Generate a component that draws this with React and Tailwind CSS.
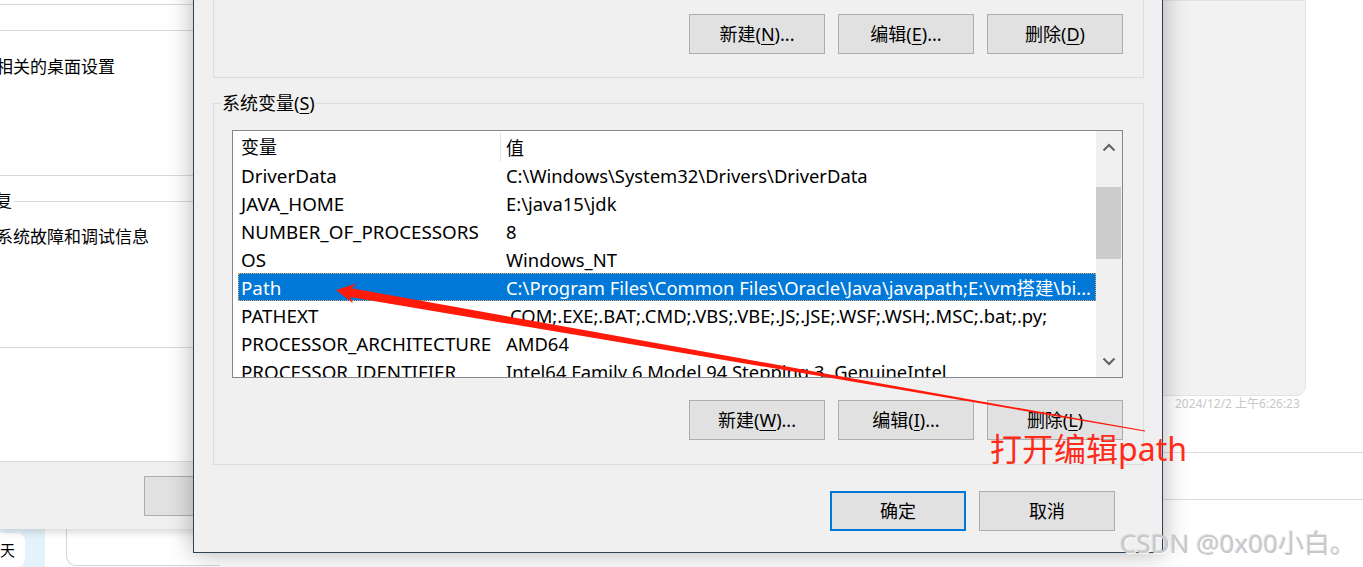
import React from "react";

const U = ({ children }) => <span className="underline underline-offset-[3px] decoration-1">{children}</span>;

function Btn({ children, primary }) {
  return (
    <div
      className={
        primary
          ? "w-[136px] h-[40px] shrink-0 flex items-center justify-center bg-[#e1e1e1] border-2 border-[#0078d7] text-[18px] leading-none text-black"
          : "w-[136px] h-[40px] shrink-0 flex items-center justify-center bg-[#e1e1e1] border border-[#adadad] text-[18px] leading-none text-black"
      }
    >
      {children}
    </div>
  );
}

function Chevron({ down }) {
  return (
    <svg width="14" height="9" viewBox="0 0 14 9">
      <polyline
        points={down ? "1.5,1.5 7,7 12.5,1.5" : "1.5,7.5 7,2 12.5,7.5"}
        fill="none"
        stroke="#606060"
        strokeWidth="2"
      />
    </svg>
  );
}

const rows = [
  ["DriverData", "C:\\Windows\\System32\\Drivers\\DriverData"],
  ["JAVA_HOME", "E:\\java15\\jdk"],
  ["NUMBER_OF_PROCESSORS", "8"],
  ["OS", "Windows_NT"],
  ["Path", "C:\\Program Files\\Common Files\\Oracle\\Java\\javapath;E:\\vm搭建\\bi...", true],
  ["PATHEXT", ".COM;.EXE;.BAT;.CMD;.VBS;.VBE;.JS;.JSE;.WSF;.WSH;.MSC;.bat;.py;"],
  ["PROCESSOR_ARCHITECTURE", "AMD64"],
  ["PROCESSOR_IDENTIFIER", "Intel64 Family 6 Model 94 Stepping 3, GenuineIntel"],
];

export default function App() {
  return (
    <div className="relative w-[1363px] h-[567px] overflow-hidden bg-white text-black font-['Noto_Sans','Noto_Sans_CJK_SC',sans-serif]">
      {/* bottom-left chat strip */}
      <div className="absolute left-0 top-[529px] w-[220px] h-[38px] flex bg-white">
        <div className="w-[45px] bg-[#e4f3fb] pt-[4px] shrink-0">
          <div className="w-[25px] h-full bg-white rounded-r-[8px] flex items-center justify-end pr-[10px] text-[15px] whitespace-nowrap">
            聊天
          </div>
        </div>
        <div className="w-[21px] shrink-0" />
        <div className="flex-1 h-[37px] border-l border-b border-[#d6d6d6] rounded-bl-[10px]" />
      </div>

      {/* left system properties window */}
      <div className="absolute left-0 top-0 w-[260px] h-[529px] bg-white flex flex-col shadow-[0_3px_8px_rgba(0,0,0,0.16)] text-[17px]">
        <div className="h-[5px] border-b border-[#d9d9d9] shrink-0" />
        <div className="h-[26px] border-b border-[#d9d9d9] shrink-0" />
        <div className="h-[145px] border-b border-[#d9d9d9] shrink-0 pt-[24px]">
          <p className="-ml-[4px] leading-[24px] whitespace-nowrap">相关的桌面设置</p>
        </div>
        <div className="h-[172px] border-b border-[#d9d9d9] shrink-0 pt-[13px] flex flex-col">
          <div className="h-[24px] flex items-center">
            <span className="-ml-[5px] leading-[24px]">复</span>
            <div className="flex-1 ml-[2px] border-t border-[#d9d9d9]" />
          </div>
          <p className="mt-[12px] -ml-[4px] leading-[24px] whitespace-nowrap">系统故障和调试信息</p>
        </div>
        <div className="h-[113px] shrink-0" />
        <div className="h-[68px] shrink-0 border-t border-[#dcdcdc] bg-[#f0f0f0] pt-[14px] pl-[144px]">
          <div className="w-[112px] h-[40px] bg-[#e1e1e1] border border-[#adadad]" />
        </div>
      </div>

      {/* right chat panel */}
      <div className="absolute left-[1000px] top-0 w-[363px] h-[567px] flex flex-col bg-white">
        <div className="w-[306px] h-[396px] shrink-0 bg-[#f2f2f2] border border-[#e3e3e3] rounded-br-[10px]" />
        <div className="pl-[175px] text-[12px] leading-[16px] text-[#c8c8c8] whitespace-nowrap">2024/12/2 上午6:26:23</div>
        <div className="h-[41px] shrink-0 border-b border-[#dcdcdc]" />
        <div className="h-[47px] shrink-0 border-b border-[#dcdcdc]" />
      </div>

      {/* environment variables dialog */}
      <div className="absolute left-[193px] top-[-21px] w-[970px] h-[574px] bg-[#f0f0f0] border border-[#2f4356] shadow-[0_0_24px_rgba(0,0,0,0.3)] flex flex-col pl-[19px] pr-[18px]">
        {/* user variables group (bottom part) */}
        <div className="h-[98px] shrink-0 border border-[#dcdcdc] flex items-end justify-end pr-[20px] pb-[23px] gap-[13px]">
          <Btn>
            新建(<U>N</U>)...
          </Btn>
          <Btn>
            编辑(<U>E</U>)...
          </Btn>
          <Btn>
            删除(<U>D</U>)
          </Btn>
        </div>

        {/* system variables group */}
        <div className="relative mt-[25px] h-[362px] shrink-0 border border-[#dcdcdc] pt-[26px] pl-[18px] flex flex-col">
          <div className="absolute left-[7px] top-[-13px] px-[1px] bg-[#f0f0f0] text-[18px] leading-[24px] whitespace-nowrap">
            系统变量(<U>S</U>)
          </div>

          <div className="w-[891px] h-[248px] shrink-0 border border-[#828790] bg-white flex overflow-hidden">
            <div className="flex-1 flex flex-col pl-[5px] overflow-hidden">
              <div className="h-[30px] shrink-0 grid grid-cols-[262px_1fr] items-center text-[18px]">
                <div className="pl-[3px] pt-[1px] leading-[30px]">变量</div>
                <div className="h-[30px] border-l border-[#e5e5e5] pl-[5px] pt-[1px] leading-[30px]">值</div>
              </div>
              {rows.map(([k, v, sel]) => (
                <div
                  key={k}
                  className={
                    sel
                      ? "h-[28px] shrink-0 grid grid-cols-[261px_1fr] items-center bg-[#0078d7] text-white border border-dotted border-[#f0a860]"
                      : "h-[28px] shrink-0 grid grid-cols-[261px_1fr] items-center border border-transparent"
                  }
                >
                  <div className="pl-[2px] pt-[1px] text-[18.8px] leading-[26px] whitespace-nowrap overflow-hidden">{k}</div>
                  <div className="pl-[6px] pt-[1px] text-[18.4px] leading-[26px] whitespace-nowrap overflow-hidden">{v}</div>
                </div>
              ))}
            </div>
            <div className="w-[26px] shrink-0 bg-[#f0f0f0] flex flex-col">
              <div className="h-[32px] shrink-0 flex items-center justify-center pt-[1px]">
                <Chevron />
              </div>
              <div className="flex-1 pt-[24px]">
                <div className="h-[72px] mr-[1px] bg-[#cdcdcd]" />
              </div>
              <div className="h-[32px] shrink-0 flex items-center justify-center">
                <Chevron down />
              </div>
            </div>
          </div>

          <div className="mt-[22px] flex justify-end pr-[20px] gap-[13px]">
            <Btn>
              新建(<U>W</U>)...
            </Btn>
            <Btn>
              编辑(<U>I</U>)...
            </Btn>
            <Btn>
              删除(<U>L</U>)
            </Btn>
          </div>
        </div>

        {/* OK / Cancel */}
        <div className="mt-[26px] flex justify-end pr-[29px] gap-[13px]">
          <Btn primary>确定</Btn>
          <Btn>取消</Btn>
        </div>
      </div>

      {/* red annotation arrow */}
      <svg className="absolute left-0 top-0 pointer-events-none" width="1363" height="567" viewBox="0 0 1363 567">
        <polygon
          fill="#ff1a0a"
          points="336,290 356.4,283.4 351.6,288.2 589.6,331.1 827.6,373.9 1145.1,430.6 1144.9,431.4 827.0,377.3 588.6,337.1 350.0,297.0 353.0,303.2"
        />
      </svg>

      <div className="absolute left-[990px] top-[433px] text-[32px] leading-[32px] text-[#ff2a1a] whitespace-nowrap">
        打开编辑path
      </div>

      <div className="absolute left-[1120px] top-[530px] text-[26px] leading-[26px] text-[#c8c8c8] whitespace-nowrap [text-shadow:1px_1px_0_rgba(255,255,255,0.9),-1px_-1px_1px_rgba(120,120,120,0.2)]">
        CSDN @0x00小白。
      </div>
    </div>
  );
}
